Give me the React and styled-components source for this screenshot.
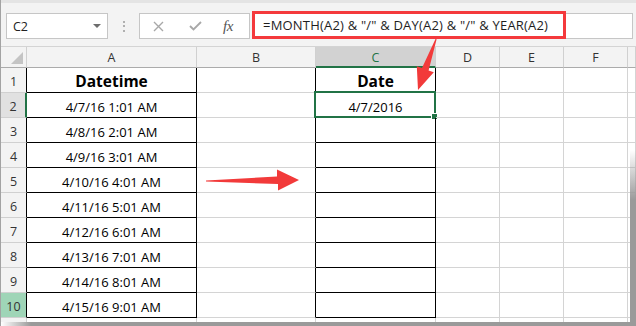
import React from "react";
import styled, { createGlobalStyle } from "styled-components";

const Global = createGlobalStyle`
  html, body { margin: 0; padding: 0; background: #ffffff; }
  body { font-family: "Open Sans", "Liberation Sans", sans-serif; }
  * { box-sizing: border-box; }
`;

const Frame = styled.div`
  position: relative;
  width: 636px;
  height: 326px;
  overflow: hidden;
  display: flex;
  background: #ffffff;

  &::after {
    content: "";
    position: absolute;
    right: 0;
    top: 0;
    bottom: 0;
    width: 6px;
    background: linear-gradient(to bottom, rgba(154,154,154,0) 0px, rgba(154,154,154,0) 150px, #9a9a9a 200px, #9a9a9a 100%);
    pointer-events: none;
  }
`;

const LeftEdge = styled.div`
  width: 1px;
  flex: none;
  background: #a3a3a3;
`;

const Main = styled.div`
  flex: 1;
  display: flex;
  flex-direction: column;
  min-width: 0;
`;

const FormulaBar = styled.div`
  height: 47px;
  flex: none;
  display: flex;
  align-items: center;
  background: #f3f3f3;
  border-top: 3px solid #e4e4e4;
  border-bottom: 1px solid #d4d4d4;
  padding: 0 0 0 5px;
`;

const Box = styled.div`
  height: 26px;
  width: ${(p) => p.$w}px;
  background: #ffffff;
  border: 1px solid #c6c6c6;
  display: flex;
  align-items: center;
  margin-top: 3px;
`;

const NameBox = styled(Box)`
  justify-content: space-between;
  padding: 0 6px 0 6px;
  font-size: 12.5px;
  color: #222;
`;

const DropTri = styled.span`
  width: 0;
  height: 0;
  border-left: 4px solid transparent;
  border-right: 4px solid transparent;
  border-top: 4px solid #6d6d6d;
`;

const Grip = styled.div`
  width: 31px;
  flex: none;
  display: flex;
  flex-direction: column;
  align-items: center;
  gap: 2.5px;
  margin-top: 3px;
`;

const Dot = styled.span`
  width: 2px;
  height: 2px;
  background: #b0b0b0;
`;

const FuncBox = styled(Box)`
  padding: 0 0 0 11px;
`;

const IconSlot = styled.span`
  width: ${(p) => p.$w}px;
  margin-left: ${(p) => p.$ml || 0}px;
  flex: none;
  display: flex;
  justify-content: center;
  align-items: center;
`;

const Fx = styled.span`
  font-family: "Liberation Serif", serif;
  font-style: italic;
  font-size: 15px;
  color: #555;
  letter-spacing: -0.5px;
`;

const InputBox = styled.div`
  flex: 1;
  height: 26px;
  margin-left: 2px;
  margin-top: 3px;
  background: #ffffff;
  border-top: 1px solid #c6c6c6;
  border-bottom: 1px solid #c6c6c6;
  border-right: 1px solid #c6c6c6;
  display: flex;
  align-items: center;
  margin-right: 3px;
`;

const Highlight = styled.div`
  width: 314px;
  height: 28px;
  margin-top: -2px;
  border: 3px solid #f4393c;
  display: flex;
  align-items: center;
  padding-left: 8px;
  font-family: "Open Sans", sans-serif;
  font-size: 13px;
  letter-spacing: 0.2px;
  color: #1e1e1e;
  white-space: nowrap;
`;

const Sheet = styled.div`
  flex: 1;
  display: grid;
  grid-template-columns: 26px 170px 119px 120px 64px 64px 64px 1fr;
  grid-template-rows: 21px repeat(11, 25px);
  overflow: hidden;
  min-height: 0;
`;

const Corner = styled.div`
  background: #f3f3f3;
  border-right: 1px solid #d0d0d0;
  border-bottom: 1px solid #ababab;
  display: flex;
  align-items: flex-end;
  justify-content: flex-end;
  padding: 0 3px 3px 0;
`;

const CornerTri = styled.span`
  width: 0;
  height: 0;
  border-left: 12px solid transparent;
  border-bottom: 12px solid #c4c4c4;
`;

const ColHead = styled.div`
  background: ${(p) => (p.$sel ? "#d2d2d2" : "#f3f3f3")};
  border-right: 1px solid #d0d0d0;
  border-bottom: ${(p) => (p.$sel ? "2px solid #217346" : "1px solid #ababab")};
  color: ${(p) => (p.$sel ? "#217346" : "#333")};
  font-size: 12.5px;
  display: flex;
  align-items: flex-end;
  justify-content: center;
  line-height: 17px;
  padding-bottom: ${(p) => (p.$sel ? 0 : 1)}px;
`;

const RowHead = styled.div`
  background: ${(p) => p.$bg || "#f3f3f3"};
  border-right: ${(p) => (p.$sel ? "2px solid #217346" : `1px solid ${p.$edge || "#d0d0d0"}`)};
  border-bottom: 1px solid #d0d0d0;
  color: #333;
  font-size: 12.5px;
  display: flex;
  align-items: flex-end;
  justify-content: center;
  line-height: 17px;
  padding-bottom: 2px;
`;

const Cell = styled.div`
  position: relative;
  border-right: 1px solid ${(p) => (p.$right ? "#000" : "#d4d4d4")};
  border-bottom: 1px solid ${(p) => (p.$bottom ? "#000" : "#d4d4d4")};
  display: flex;
  align-items: flex-end;
  justify-content: center;
  font-size: ${(p) => (p.$bold ? "15.5px" : "13px")};
  font-weight: ${(p) => (p.$bold ? 700 : 400)};
  line-height: ${(p) => (p.$bold ? "20px" : "17px")};
  color: #000;
  white-space: nowrap;
  padding-bottom: 1px;
`;

const Selection = styled.span`
  position: absolute;
  left: -2px;
  top: -2px;
  right: -1px;
  bottom: -1px;
  border: 2px solid #217346;
  pointer-events: none;
`;

const Handle = styled.span`
  position: absolute;
  right: -3px;
  bottom: -3px;
  width: 7px;
  height: 7px;
  background: #217346;
  border: 1px solid #ffffff;
`;

const BottomShadow = styled.div`
  height: 4px;
  flex: none;
  background: linear-gradient(to right, rgba(150,150,150,0) 0px, #9a9a9a 30px, #9a9a9a 100%);
`;

const Overlay = styled.svg`
  position: absolute;
  left: 0;
  top: 0;
  width: 636px;
  height: 326px;
  pointer-events: none;
`;

const dates = [
  "4/7/16 1:01 AM",
  "4/8/16 2:01 AM",
  "4/9/16 3:01 AM",
  "4/10/16 4:01 AM",
  "4/11/16 5:01 AM",
  "4/12/16 6:01 AM",
  "4/13/16 7:01 AM",
  "4/14/16 8:01 AM",
  "4/15/16 9:01 AM",
];

const colLetters = ["A", "B", "C", "D", "E", "F", ""];

export default function App() {
  const rows = [];
  for (let r = 1; r <= 11; r++) {
    const inTable = r <= 10;
    rows.push(
      <RowHead
        key={`h${r}`}
        $sel={r === 2}
        $edge={inTable ? "#000" : "#d0d0d0"}
        $bg={r === 10 ? "#9fd5b7" : r === 2 ? "#e1e1e1" : undefined}
      >
        {inTable ? r : ""}
      </RowHead>
    );
    let aText = "";
    if (r === 1) aText = "Datetime";
    else if (r <= 10) aText = dates[r - 2];
    rows.push(
      <Cell key={`a${r}`} $right={inTable} $bottom={inTable} $bold={r === 1}>
        {aText}
      </Cell>
    );
    rows.push(<Cell key={`b${r}`} $right={inTable} />);
    rows.push(
      <Cell key={`c${r}`} $right={inTable} $bottom={inTable} $bold={r === 1}>
        {r === 1 ? "Date" : r === 2 ? "4/7/2016" : ""}
        {r === 2 && (
          <>
            <Selection />
            <Handle />
          </>
        )}
      </Cell>
    );
    rows.push(<Cell key={`d${r}`} />);
    rows.push(<Cell key={`e${r}`} />);
    rows.push(<Cell key={`f${r}`} />);
    rows.push(<Cell key={`g${r}`} />);
  }

  return (
    <>
      <Global />
      <Frame>
        <LeftEdge />
        <Main>
          <FormulaBar>
            <NameBox $w={102}>
              <span>C2</span>
              <DropTri />
            </NameBox>
            <Grip>
              <Dot />
              <Dot />
              <Dot />
            </Grip>
            <FuncBox $w={111}>
              <IconSlot $w={14}>
                <svg width="11" height="11" viewBox="0 0 11 11">
                  <path d="M1 1 L10 10 M10 1 L1 10" stroke="#a8a8a8" strokeWidth="1.4" fill="none" />
                </svg>
              </IconSlot>
              <IconSlot $w={14} $ml={23}>
                <svg width="13" height="10" viewBox="0 0 13 10">
                  <path d="M1 5 L4.5 8.5 L12 1" stroke="#a8a8a8" strokeWidth="1.8" fill="none" />
                </svg>
              </IconSlot>
              <IconSlot $w={16} $ml={18}>
                <Fx>fx</Fx>
              </IconSlot>
            </FuncBox>
            <InputBox>
              <Highlight>=MONTH(A2) &amp; "/" &amp; DAY(A2) &amp; "/" &amp; YEAR(A2)</Highlight>
            </InputBox>
          </FormulaBar>
          <Sheet>
            <Corner>
              <CornerTri />
            </Corner>
            {colLetters.map((c, i) => (
              <ColHead key={i} $sel={c === "C"}>
                {c}
              </ColHead>
            ))}
            {rows}
          </Sheet>
          <BottomShadow />
        </Main>
        <Overlay viewBox="0 0 636 326">
          <polygon
            points="206,180.5 277,176.5 277,169.5 299,180 278,190.5 278,184 206,181.5"
            fill="#f23a3a"
          />
          <polygon
            points="436.6,39.2 428.6,70.5 433.8,72.3 418,90 416.8,66.3 422,68.1 435.6,38.8"
            fill="#f23a3a"
          />
        </Overlay>
      </Frame>
    </>
  );
}
